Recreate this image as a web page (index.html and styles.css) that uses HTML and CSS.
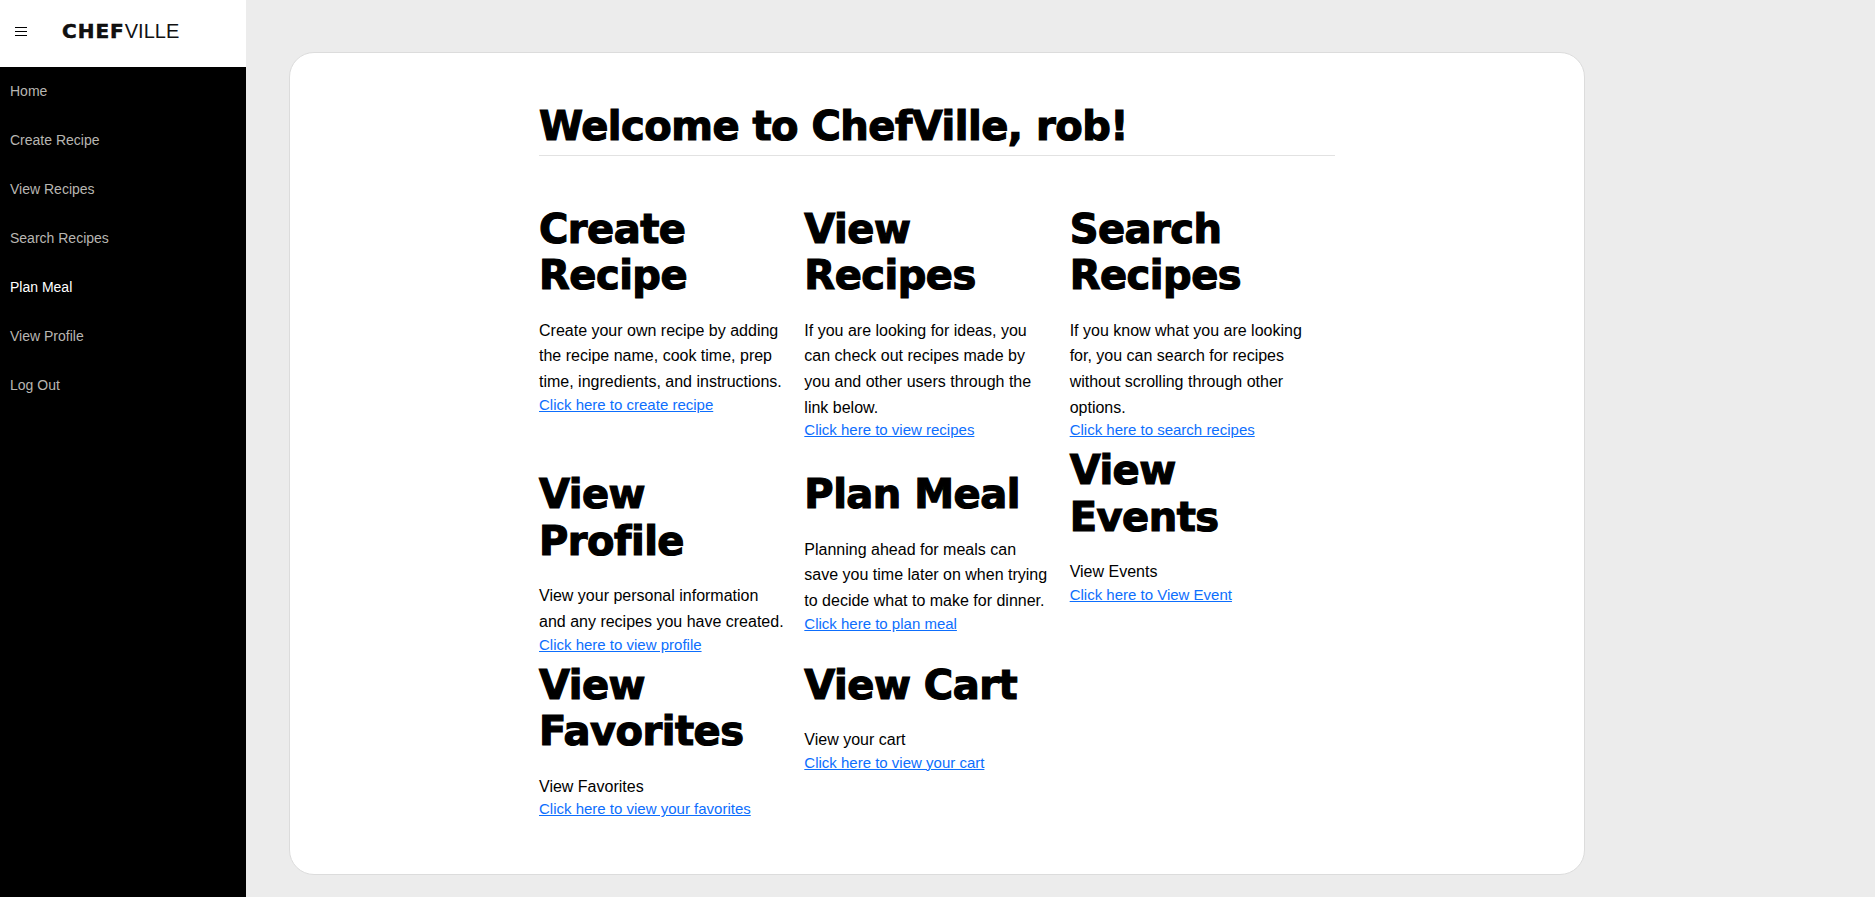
FILE: index.html
```html
<!DOCTYPE html>
<html lang="en">
<head>
  <meta charset="UTF-8">
  <meta name="viewport" content="width=device-width, initial-scale=1.0">
  <title>ChefVille - Home</title>
  <link rel="stylesheet" href="styles.css">
</head>
<body>
  <aside class="sidebar">
    <div class="sidebar-header">
      <button class="menu-btn" type="button" aria-label="Menu">
        <svg width="12" height="9" viewBox="0 0 12 9">
          <path d="M0 0.5H12M0 4.5H12M0 8.5H12" stroke="#000" stroke-width="1"/>
        </svg>
      </button>
      <div class="brand"><span class="brand-bold">CHEF</span>VILLE</div>
    </div>
    <nav class="nav">
      <a href="#" class="nav-link">Home</a>
      <a href="#" class="nav-link">Create Recipe</a>
      <a href="#" class="nav-link">View Recipes</a>
      <a href="#" class="nav-link">Search Recipes</a>
      <a href="#" class="nav-link active">Plan Meal</a>
      <a href="#" class="nav-link">View Profile</a>
      <a href="#" class="nav-link">Log Out</a>
    </nav>
  </aside>

  <main class="main">
    <div class="card">
      <div class="content">
        <h1 class="welcome">Welcome to ChefVille, rob!</h1>

        <div class="features">
          <div class="feature">
            <h2>Create Recipe</h2>
            <p>Create your own recipe by adding the recipe name, cook time, prep time, ingredients, and instructions.</p>
            <a href="#">Click here to create recipe</a>
          </div>
          <div class="feature">
            <h2>View Recipes</h2>
            <p>If you are looking for ideas, you can check out recipes made by you and other users through the link below.</p>
            <a href="#">Click here to view recipes</a>
          </div>
          <div class="feature">
            <h2>Search Recipes</h2>
            <p>If you know what you are looking for, you can search for recipes without scrolling through other options.</p>
            <a href="#">Click here to search recipes</a>
          </div>

          <div class="feature spaced">
            <h2>View Profile</h2>
            <p>View your personal information and any recipes you have created.</p>
            <a href="#">Click here to view profile</a>
          </div>
          <div class="feature spaced">
            <h2>Plan Meal</h2>
            <p>Planning ahead for meals can save you time later on when trying to decide what to make for dinner.</p>
            <a href="#">Click here to plan meal</a>
          </div>
          <div class="feature">
            <h2>View Events</h2>
            <p>View Events</p>
            <a href="#">Click here to View Event</a>
          </div>

          <div class="feature">
            <h2>View Favorites</h2>
            <p>View Favorites</p>
            <a href="#">Click here to view your favorites</a>
          </div>
          <div class="feature">
            <h2>View Cart</h2>
            <p>View your cart</p>
            <a href="#">Click here to view your cart</a>
          </div>
        </div>
      </div>
    </div>
  </main>
</body>
</html>
```

FILE: styles.css
```css
body {
  font-family: "Liberation Sans", Arial, sans-serif;
  margin: 0;
  display: flex;
  min-height: 100vh;
  background-color: #ececec;
  color: #000;
}

/* sidebar */

.sidebar {
  width: 246px;
  flex-shrink: 0;
  display: flex;
  flex-direction: column;
  background-color: #000;
}

.sidebar-header {
  height: 67px;
  display: flex;
  align-items: center;
  padding: 0 0 6px 15px;
  box-sizing: border-box;
  background-color: #fff;
}

.menu-btn {
  display: flex;
  padding: 0;
  margin-top: 2px;
  border: none;
  background: none;
  cursor: pointer;
}

.brand {
  margin-left: 35px;
  font-size: 20px;
  color: #111;
}

.brand-bold {
  font-family: "DejaVu Sans", sans-serif;
  font-weight: bold;
  letter-spacing: 1px;
  -webkit-text-stroke: 0.5px #000;
}

.nav {
  display: flex;
  flex-direction: column;
}

.nav-link {
  padding: 15px 10px;
  font-size: 14px;
  line-height: 19px;
  color: #b8b6b2;
  text-decoration: none;
}

.nav-link:hover {
  color: #fff;
}

.nav-link.active {
  color: #fff;
}

/* main card */

.main {
  flex: 1;
  padding: 52px 43px 24px;
}

.card {
  max-width: 1294px;
  background: #fff;
  border: 1px solid #dcdcdc;
  border-radius: 25px;
  padding: 50px 0 55px;
}

.content {
  max-width: 796px;
  margin: 0 auto;
}

.welcome,
.feature h2 {
  font-family: "DejaVu Sans", sans-serif;
  font-weight: bold;
  font-size: 40px;
  line-height: 1.165;
  letter-spacing: -0.5px;
  -webkit-text-stroke: 1.2px #000;
}

.welcome {
  margin: 0 0 50px;
  padding-bottom: 5px;
  border-bottom: 1px solid #e2e2e2;
}

.features {
  display: grid;
  grid-template-columns: repeat(3, 1fr);
  row-gap: 7px;
  align-items: start;
}

.feature {
  padding-right: 19px;
}

.feature.spaced {
  margin-top: 24px;
}

.feature h2 {
  margin: 0 0 19px;
}

.feature p {
  margin: 0;
  font-size: 16px;
  line-height: 1.6;
}

.feature a {
  display: block;
  font-size: 15px;
  line-height: 20px;
  color: #0d6efd;
}
```
